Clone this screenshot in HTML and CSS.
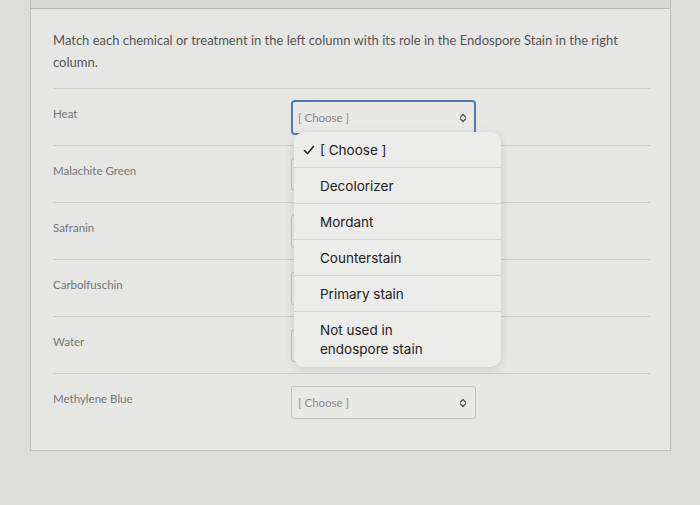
FILE: index.html
```html
<!DOCTYPE html>
<html>
<head>
<meta charset="utf-8">
<link rel="stylesheet" href="styles.css">
</head>
<body>
<div class="page">
  <div class="card">
    <div class="card-head"></div>
    <div class="card-body">
      <p class="question">Match each chemical or treatment in the left column with its role in the Endospore Stain in the right column.</p>
      <div class="rows">
        <div class="row">
          <div class="label">Heat</div>
          <div class="field">
            <div class="select focused"><span>[ Choose ]</span><svg class="arrows" viewBox="0 0 8 10" width="8" height="10"><polyline points="1.5,4 4,1.5 6.5,4" /><polyline points="1.5,6 4,8.5 6.5,6" /></svg></div>
            <div class="menu">
              <div class="opt checked"><svg class="check" viewBox="0 0 12 10" width="12" height="10"><polyline points="1.5,5.5 4.5,8.5 10.5,1.5" /></svg>[ Choose ]</div>
              <div class="opt">Decolorizer</div>
              <div class="opt">Mordant</div>
              <div class="opt">Counterstain</div>
              <div class="opt">Primary stain</div>
              <div class="opt tall">Not used in<br>endospore stain</div>
            </div>
          </div>
        </div>
        <div class="row">
          <div class="label">Malachite Green</div>
          <div class="field"><div class="select"><span>[ Choose ]</span><svg class="arrows" viewBox="0 0 8 10" width="8" height="10"><polyline points="1.5,4 4,1.5 6.5,4" /><polyline points="1.5,6 4,8.5 6.5,6" /></svg></div></div>
        </div>
        <div class="row">
          <div class="label">Safranin</div>
          <div class="field"><div class="select"><span>[ Choose ]</span><svg class="arrows" viewBox="0 0 8 10" width="8" height="10"><polyline points="1.5,4 4,1.5 6.5,4" /><polyline points="1.5,6 4,8.5 6.5,6" /></svg></div></div>
        </div>
        <div class="row">
          <div class="label">Carbolfuschin</div>
          <div class="field"><div class="select"><span>[ Choose ]</span><svg class="arrows" viewBox="0 0 8 10" width="8" height="10"><polyline points="1.5,4 4,1.5 6.5,4" /><polyline points="1.5,6 4,8.5 6.5,6" /></svg></div></div>
        </div>
        <div class="row">
          <div class="label">Water</div>
          <div class="field"><div class="select"><span>[ Choose ]</span><svg class="arrows" viewBox="0 0 8 10" width="8" height="10"><polyline points="1.5,4 4,1.5 6.5,4" /><polyline points="1.5,6 4,8.5 6.5,6" /></svg></div></div>
        </div>
        <div class="row last">
          <div class="label">Methylene Blue</div>
          <div class="field"><div class="select"><span>[ Choose ]</span><svg class="arrows" viewBox="0 0 8 10" width="8" height="10"><polyline points="1.5,4 4,1.5 6.5,4" /><polyline points="1.5,6 4,8.5 6.5,6" /></svg></div></div>
        </div>
      </div>
    </div>
  </div>
</div>
</body>
</html>
```
FILE: styles.css
```css
html, body {
  margin: 0;
  padding: 0;
}
body {
  background: #dcdcda;
  font-family: Lato, "Liberation Sans", sans-serif;
  width: 700px;
  height: 505px;
  overflow: hidden;
}
.page {
  padding: 0 29px 0 30px;
}
.card {
  border: 1px solid #bfbfbd;
  border-top: none;
  background: #e6e6e4;
}
.card-head {
  height: 8px;
  background: #d9d9d7;
  border-bottom: 1px solid #b9b9b7;
}
.card-body {
  padding: 20px 20px 20px 22px;
}
.question {
  margin: 0 0 15px 0;
  font-size: 13px;
  line-height: 22px;
  color: #555;
  padding-right: 20px;
}
.rows {
  border-top: 1px solid #cdcdcb;
}
.row {
  display: flex;
  height: 56px;
  border-bottom: 1px solid #cdcdcb;
}
.row.last {
  border-bottom: none;
}
.label {
  width: 238px;
  padding-top: 17px;
  font-size: 11.5px;
  line-height: 16px;
  color: #777;
}
.field {
  position: relative;
  padding-top: 12px;
}
.select {
  box-sizing: border-box;
  width: 185px;
  height: 33px;
  border: 1px solid #c2c2c0;
  border-radius: 3px;
  display: flex;
  align-items: center;
  justify-content: space-between;
  padding: 0 8px 0 6px;
  font-size: 11.5px;
  color: #8a8a88;
  background: #e8e8e6;
}
.select.focused {
  border: 2px solid #5379b0;
  border-radius: 4px;
  padding: 0 7px 0 5px;
  margin-top: -1px;
  height: 35px;
}
.arrows {
  fill: none;
  stroke: #555;
  stroke-width: 1.4;
  stroke-linecap: round;
  stroke-linejoin: round;
}
.menu {
  position: absolute;
  left: 3px;
  top: 43px;
  width: 207px;
  background: #ececea;
  border-radius: 10px;
  box-shadow: 0 2px 10px rgba(0, 0, 0, 0.12);
  font-family: Inter, "Noto Sans", sans-serif;
  font-size: 13.5px;
  color: #222;
  z-index: 5;
  overflow: hidden;
}
.opt {
  height: 35px;
  border-bottom: 1px solid #d3d3d1;
  display: flex;
  align-items: center;
  padding-left: 26px;
}
.opt.checked {
  padding-left: 9px;
}
.check {
  fill: none;
  stroke: #222;
  stroke-width: 1.6;
  stroke-linecap: round;
  stroke-linejoin: round;
  margin-right: 5px;
}
.opt.tall {
  height: 55px;
  border-bottom: none;
  line-height: 19px;
  align-items: flex-start;
  padding-top: 9px;
  box-sizing: border-box;
}
```
